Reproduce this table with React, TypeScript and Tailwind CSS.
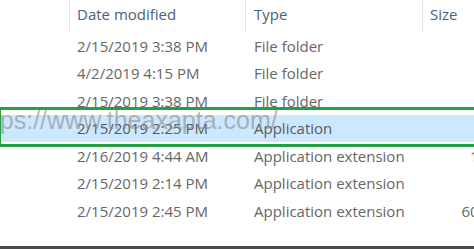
const rows = [
  { date: "2/15/2019 3:38 PM", type: "File folder", size: "" },
  { date: "4/2/2019 4:15 PM", type: "File folder", size: "" },
  { date: "2/15/2019 3:38 PM", type: "File folder", size: "" },
  { date: "2/15/2019 2:25 PM", type: "Application", size: "9 KB", selected: true },
  { date: "2/16/2019 4:44 AM", type: "Application extension", size: "12 KB" },
  { date: "2/15/2019 2:14 PM", type: "Application extension", size: "8 KB" },
  { date: "2/15/2019 2:45 PM", type: "Application extension", size: "604 KB" },
];

export default function App() {
  return (
    <div className="relative h-[249px] w-[474px] overflow-hidden bg-white font-['Open_Sans',sans-serif] text-[15px]">
      {/* column headers */}
      <div className="grid h-[32px] grid-cols-[69px_176px_177px_120px] items-center text-[#4c607a]">
        <div />
        <div className="h-full border-l border-[#e5e5e5] pl-[7px] leading-[28px]">Date modified</div>
        <div className="h-full border-l border-[#e5e5e5] pl-[8px] leading-[28px]">Type</div>
        <div className="h-full border-l border-[#e5e5e5] pl-[7px] leading-[28px]">Size</div>
      </div>

      {rows.map((r, i) => (
        <div
          key={i}
          className={
            r.selected
              ? "grid h-[27.5px] grid-cols-[69px_176px_177px_120px] items-center bg-[#cce8ff] text-[#5a5a5a]"
              : "grid h-[27.5px] grid-cols-[69px_176px_177px_120px] items-center text-[#666666]"
          }
        >
          <div />
          <div className="pl-[8px] whitespace-nowrap">{r.date}</div>
          <div className="pl-[9px] whitespace-nowrap">{r.type}</div>
          <div className="pr-[32px] text-right whitespace-nowrap">{r.size}</div>
        </div>
      ))}

      {/* green highlight box */}
      <div className="absolute left-[-2px] top-[107px] h-[40px] w-[480px] border-[3px] border-[#23a03f]" />

      {/* watermark */}
      <div className="pointer-events-none absolute left-[-28px] top-[105px] whitespace-nowrap font-['Liberation_Sans',sans-serif] text-[25px] leading-[30px] text-[#8a8a8a]/60">
        https://www.theaxapta.com/
      </div>

      {/* bottom bar */}
      <div className="absolute bottom-0 left-0 h-[3px] w-full bg-[#4a4a4a]" />
    </div>
  );
}
